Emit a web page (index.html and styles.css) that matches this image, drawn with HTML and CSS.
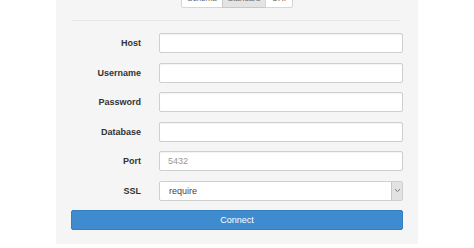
FILE: index.html
```html
<!DOCTYPE html>
<html>
<head>
<meta charset="utf-8">
<link rel="stylesheet" href="styles.css">
</head>
<body>
<div class="panel">
  <div class="tabs">
    <span class="tab tab-schema">Schema</span>
    <span class="tab tab-standard active">Standard</span>
    <span class="tab tab-uri">URI</span>
  </div>
  <hr class="rule">
  <form class="form">
    <div class="row"><label class="lbl">Host</label><input class="field" type="text"></div>
    <div class="row"><label class="lbl">Username</label><input class="field" type="text"></div>
    <div class="row"><label class="lbl">Password</label><input class="field" type="password"></div>
    <div class="row"><label class="lbl">Database</label><input class="field" type="text"></div>
    <div class="row"><label class="lbl">Port</label><input class="field" type="text" placeholder="5432"></div>
    <div class="row"><label class="lbl">SSL</label>
      <div class="select"><span class="sel-text">require</span><span class="sel-btn"><svg width="7" height="5" viewBox="0 0 7 5"><path d="M1 1.2 L3.5 3.6 L6 1.2" fill="none" stroke="#777" stroke-width="1"/></svg></span></div>
    </div>
    <button class="connect" type="button">Connect</button>
  </form>
</div>
</body>
</html>
```
FILE: styles.css
```css
* { box-sizing: border-box; }
html, body { margin: 0; padding: 0; background: #fff; }
body { font-family: "Liberation Sans", Arial, sans-serif; width: 474px; height: 248px; overflow: hidden; }
.panel {
  display: flow-root;
  margin-left: 56px;
  width: 362px;
  height: 244px;
  background: #f5f5f5;
  padding: 0 15px;
}
.tabs {
  display: flex;
  margin-top: -12px;
  margin-left: 111px;
}
.tab {
  font-size: 8px;
  color: #666;
  height: 20px;
  line-height: 8px;
  padding-top: 6px;
  text-align: center;
  border: 1px solid #d6d6d6;
  background: #fff;
  margin-left: -1px;
}
.tab-schema { width: 42px; border-radius: 0 0 0 2px; }
.tab-standard { width: 44px; }
.tab-uri { width: 28px; border-radius: 0 0 2px 0; }
.tab.active { background: #e4e4e4; border-color: #c8c8c8; }
.rule {
  margin: 12px 3px 0 1px;
  border: 0;
  border-top: 1px solid #e6e6e6;
  height: 0;
}
.form { display: flex; flex-direction: column; gap: 9.5px; padding-top: 12px; }
.row { display: flex; align-items: center; height: 20px; }
.lbl {
  width: 70px;
  text-align: right;
  font-size: 9px;
  font-weight: bold;
  color: #333;
  margin-right: 18px;
}
.field {
  width: 244px;
  height: 20px;
  border: 1px solid #cfcfcf;
  border-radius: 2px;
  background: #fff;
  padding: 0 8px;
  font-family: "Liberation Sans", Arial, sans-serif;
  font-size: 9px;
  color: #555;
  box-shadow: inset 0 1px 1px rgba(0,0,0,0.05);
  outline: none;
}
.field::placeholder { color: #999; }
.select {
  width: 244px;
  height: 20px;
  border: 1px solid #cfcfcf;
  border-radius: 2px;
  background: #fff;
  display: flex;
  align-items: center;
  justify-content: space-between;
}
.sel-text { font-size: 9px; color: #444; padding-left: 9px; }
.sel-btn {
  width: 11px;
  height: 18px;
  background: #e2e2e2;
  border-left: 1px solid #c8c8c8;
  display: flex;
  align-items: center;
  justify-content: center;
}
.connect {
  width: 332px;
  height: 20px;
  border: 1px solid #357ebd;
  border-radius: 2px;
  background: #3f8bd0;
  color: #fff;
  font-family: "Liberation Sans", Arial, sans-serif;
  font-size: 9px;
  padding: 0;
}
```
